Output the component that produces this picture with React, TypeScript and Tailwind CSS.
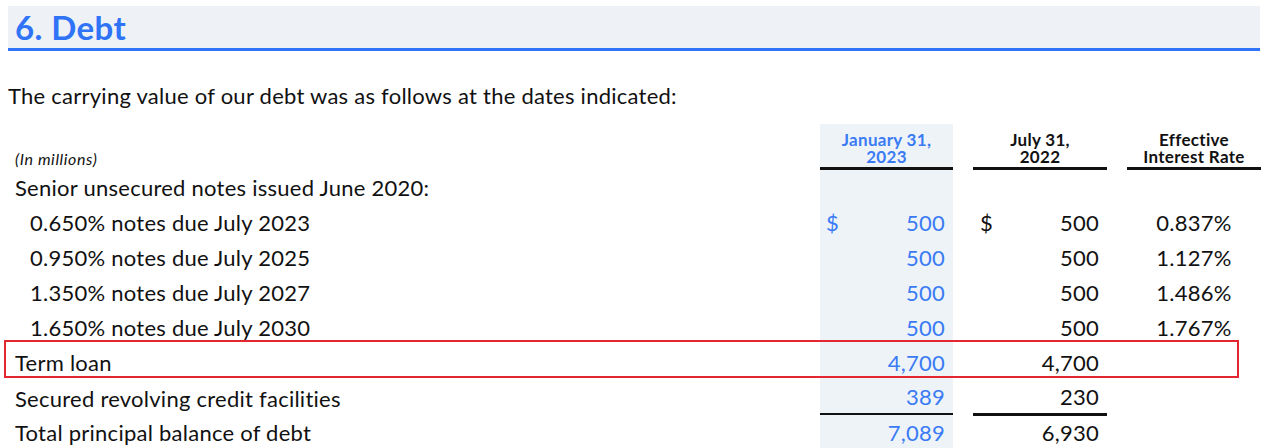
const font = { fontFamily: "Lato, 'Noto Sans', sans-serif" };

type Row = {
  label: string;
  indent?: boolean;
  jan?: string;
  jul?: string;
  rate?: string;
  dollar?: boolean;
  highlight?: boolean;
  ruleBelow?: boolean;
};

const rows: Row[] = [
  { label: "Senior unsecured notes issued June 2020:" },
  { label: "0.650% notes due July 2023", indent: true, jan: "500", jul: "500", rate: "0.837%", dollar: true },
  { label: "0.950% notes due July 2025", indent: true, jan: "500", jul: "500", rate: "1.127%" },
  { label: "1.350% notes due July 2027", indent: true, jan: "500", jul: "500", rate: "1.486%" },
  { label: "1.650% notes due July 2030", indent: true, jan: "500", jul: "500", rate: "1.767%" },
  { label: "Term loan", jan: "4,700", jul: "4,700", highlight: true },
  { label: "Secured revolving credit facilities", jan: "389", jul: "230", ruleBelow: true },
  { label: "Total principal balance of debt", jan: "7,089", jul: "6,930" },
];

const DataRow = ({ row }: { row: Row }) => (
  <div className="relative grid h-[35px] grid-cols-[1fr_133px_20px_134px_20px_134px] items-center text-[22px] tracking-[0.25px] text-[#111]">
    {row.highlight && (
      <div className="pointer-events-none absolute -left-[4px] -top-[5px] h-[38px] w-[1235px] border-2 border-[#e3262f]" />
    )}
    <div className={row.indent ? "pl-[22px]" : "pl-[7px]"}>{row.label}</div>
    <div
      className={
        "flex h-full items-center justify-between bg-[#eef3f8] pl-[6px] pr-[8px] text-[#3a7bf4] " +
        (row.ruleBelow ? "border-b-[3px] border-[#111]" : "")
      }
    >
      <span>{row.dollar ? "$" : ""}</span>
      <span>{row.jan}</span>
    </div>
    <div />
    <div
      className={
        "flex h-full items-center justify-between pl-[7px] pr-[8px] " +
        (row.ruleBelow ? "border-b-[3px] border-[#111]" : "")
      }
    >
      <span>{row.dollar ? "$" : ""}</span>
      <span>{row.jul}</span>
    </div>
    <div />
    <div className="text-center">{row.rate}</div>
  </div>
);

export default function App() {
  return (
    <div className="h-[448px] w-[1284px] overflow-hidden bg-white pl-[8px] pr-[23px] pt-[6px]" style={font}>
      <div className="w-[1252px] border-b-[3px] border-[#2f73f7] bg-[#eef2f7] pl-[7px]">
        <h2 className="h-[42px] text-[33px] font-bold leading-[42px] tracking-[0.4px] text-[#2f73f7]">6. Debt</h2>
      </div>

      <p className="mt-[32px] text-[22px] leading-[26px] tracking-[0.25px] text-[#111]">
        The carrying value of our debt was as follows at the dates indicated:
      </p>

      <div className="mt-[15px]">
        <div className="grid h-[46px] grid-cols-[1fr_133px_20px_134px_20px_134px] text-[17px] font-bold leading-[17px] tracking-[0.3px] text-[#111]">
          <div className="flex items-end pb-[3px] pl-[7px] text-[16px] font-normal italic tracking-[0.6px]">(In millions)</div>
          <div className="flex flex-col justify-end border-b-[3px] border-[#111] bg-[#eef3f8] pb-[2px] text-center text-[#3a7bf4]">
            <span>January 31,</span>
            <span>2023</span>
          </div>
          <div />
          <div className="flex flex-col justify-end border-b-[3px] border-[#111] pb-[2px] text-center">
            <span>July 31,</span>
            <span>2022</span>
          </div>
          <div />
          <div className="flex flex-col justify-end border-b-[3px] border-[#111] pb-[2px] text-center">
            <span>Effective</span>
            <span>Interest Rate</span>
          </div>
        </div>
        {rows.map((r) => (
          <DataRow key={r.label} row={r} />
        ))}
      </div>
    </div>
  );
}
